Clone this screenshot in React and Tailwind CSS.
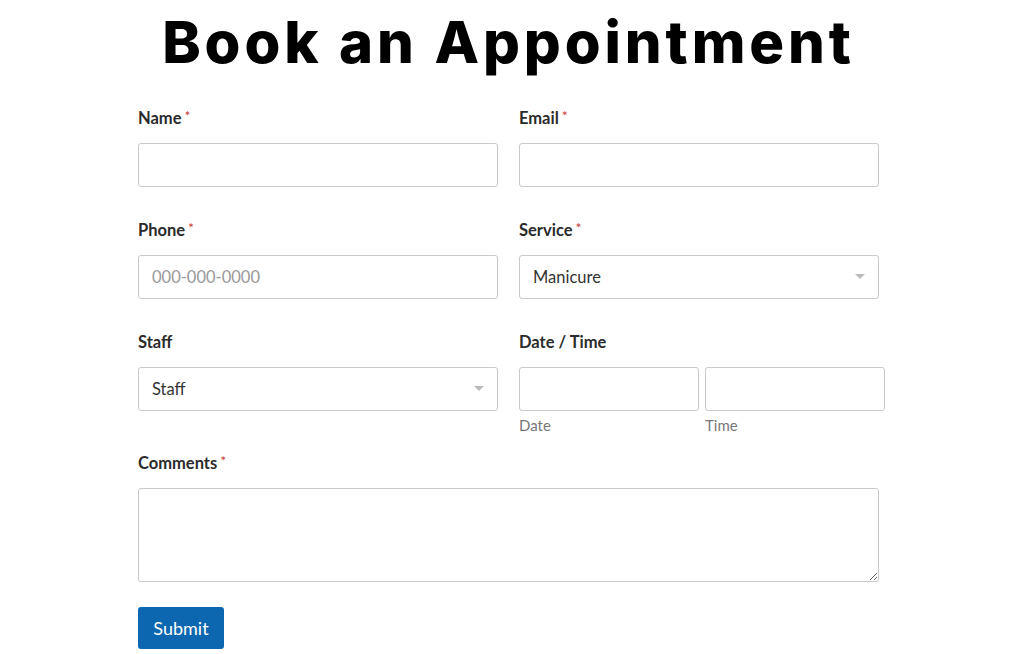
export default function App() {
  const label = 'block text-[16.5px] font-bold leading-[20px] text-[#2b2b2b]';
  const star = 'ml-[3px] align-top text-[14px] leading-[16px] font-normal text-[#c63b36]';
  const input =
    'block h-[44px] w-full rounded-[3px] border border-[#c9c9c9] bg-white px-[13px] text-[16.5px] text-[#333] outline-none placeholder:text-[#999]';
  const sub = 'mt-[5px] text-[15px] leading-[18px] text-[#777]';

  const Caret = () => (
    <span className="pointer-events-none absolute right-[14px] top-[19px] h-0 w-0 border-x-[5px] border-t-[5px] border-x-transparent border-t-[#bbb]" />
  );

  return (
    <div className="min-h-[654px] bg-white font-['Lato','Liberation_Sans',sans-serif]">
      <div className="ml-[138px] w-[741px] pt-[7px]">
        <h1 className="text-center font-['Inter','Liberation_Sans',sans-serif] text-[58px] font-extrabold leading-[70px] tracking-[3.9px] text-black">
          Book an Appointment
        </h1>

        <form className="mt-[31px]">
          <div className="grid grid-cols-2 gap-x-[21px] gap-y-[33px]">
            <div>
              <label className={label}>
                Name<span className={star}>*</span>
              </label>
              <div className="mt-[15px]">
                <input className={input} />
              </div>
            </div>
            <div>
              <label className={label}>
                Email<span className={star}>*</span>
              </label>
              <div className="mt-[15px]">
                <input className={input} />
              </div>
            </div>

            <div>
              <label className={label}>
                Phone<span className={star}>*</span>
              </label>
              <div className="mt-[15px]">
                <input className={input} placeholder="000-000-0000" />
              </div>
            </div>
            <div>
              <label className={label}>
                Service<span className={star}>*</span>
              </label>
              <div className="relative mt-[15px]">
                <div className={input + ' flex items-center'}>Manicure</div>
                <Caret />
              </div>
            </div>

            <div>
              <label className={label}>Staff</label>
              <div className="relative mt-[15px]">
                <div className={input + ' flex items-center'}>Staff</div>
                <Caret />
              </div>
            </div>
            <div>
              <label className={label}>Date / Time</label>
              <div className="mt-[15px] flex w-[366px] gap-[6px]">
                <div className="flex-1">
                  <input className={input} />
                  <div className={sub}>Date</div>
                </div>
                <div className="flex-1">
                  <input className={input} />
                  <div className={sub}>Time</div>
                </div>
              </div>
            </div>
          </div>

          <div className="mt-[19px]">
            <label className={label}>
              Comments<span className={star}>*</span>
            </label>
            <textarea className="mt-[15px] block h-[94px] w-full resize-y rounded-[3px] border border-[#c9c9c9] bg-white px-[14px] py-[10px] text-[16px] outline-none" />
          </div>

          <button
            type="button"
            className="mt-[25px] h-[42px] w-[86px] rounded-[3px] bg-[#0d67b0] text-[18px] text-white"
          >
            Submit
          </button>
        </form>
      </div>
    </div>
  );
}
